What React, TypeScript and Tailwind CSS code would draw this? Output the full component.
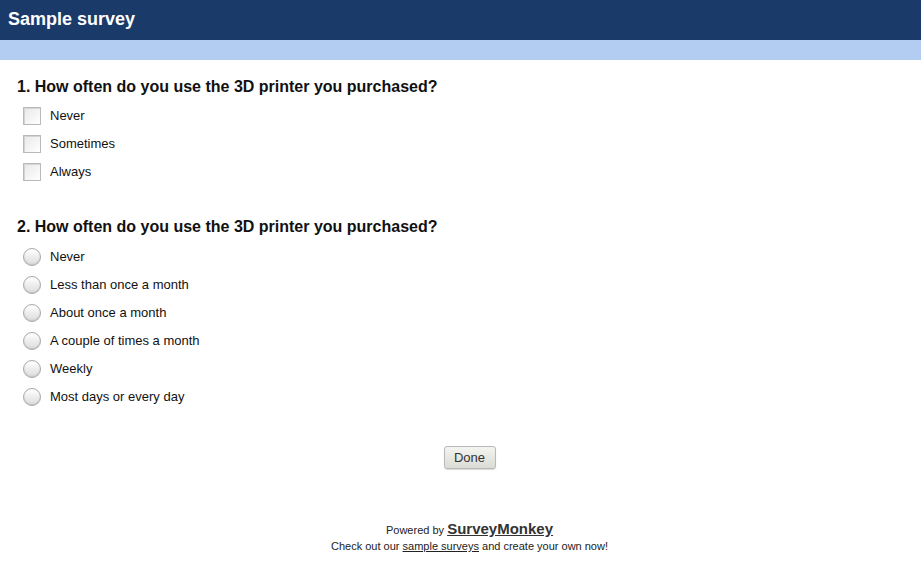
const checkOptions = ["Never", "Sometimes", "Always"];
const radioOptions = [
  "Never",
  "Less than once a month",
  "About once a month",
  "A couple of times a month",
  "Weekly",
  "Most days or every day",
];

function CheckBox() {
  return (
    <span className="w-[18px] h-[18px] border border-[#b9b9b9] bg-gradient-to-br from-[#e8e8e8] to-white shadow-[inset_1px_1px_0_#d4d4d4] flex-shrink-0" />
  );
}

function Radio() {
  return (
    <span className="w-[18px] h-[18px] rounded-full border border-[#a9a9a9] bg-gradient-to-b from-white to-[#dcdcdc] shadow-[inset_0_-1px_1px_#c8c8c8] flex-shrink-0" />
  );
}

export default function App() {
  return (
    <div className="min-h-[570px] bg-white text-[#111] font-['Liberation_Sans',Arial,sans-serif]">
      <div className="h-10 bg-[#1a3b6a] px-2 flex items-center">
        <h1 className="text-white font-bold text-[18px] leading-none -mt-[2px]">Sample survey</h1>
      </div>
      <div className="h-5 bg-[#b3cdf2]" />

      <div className="px-[17px]">
        <h2 className="mt-[17px] text-[16px] leading-5 font-bold">
          1. How often do you use the 3D printer you purchased?
        </h2>
        <div className="mt-[5px] pl-[6px]">
          {checkOptions.map((o) => (
            <label key={o} className="h-7 flex items-center gap-[9px] text-[13px]">
              <CheckBox />
              {o}
            </label>
          ))}
        </div>

        <h2 className="mt-[31px] text-[16px] leading-5 font-bold">
          2. How often do you use the 3D printer you purchased?
        </h2>
        <div className="mt-[6px] pl-[6px]">
          {radioOptions.map((o) => (
            <label key={o} className="h-7 flex items-center gap-[9px] text-[13px]">
              <Radio />
              {o}
            </label>
          ))}
        </div>
      </div>

      <div className="pl-[18px]">
        <div className="flex justify-center mt-[35px]">
          <button className="h-[23px] w-[52px] text-[13px] text-[#333] border border-[#b8b8b8] rounded-[3px] bg-gradient-to-b from-[#f4f4f0] to-[#dcdcd6] shadow-[0_1px_1px_rgba(0,0,0,0.15)]">
            Done
          </button>
        </div>

        <div className="mt-[52px] text-center text-[11px] text-[#222]">
          <div className="leading-4">
            Powered by{" "}
            <a className="text-[15px] font-bold underline text-[#333]">SurveyMonkey</a>
          </div>
          <div className="leading-4">
            Check out our <a className="underline">sample surveys</a> and create your own now!
          </div>
        </div>
      </div>
    </div>
  );
}
